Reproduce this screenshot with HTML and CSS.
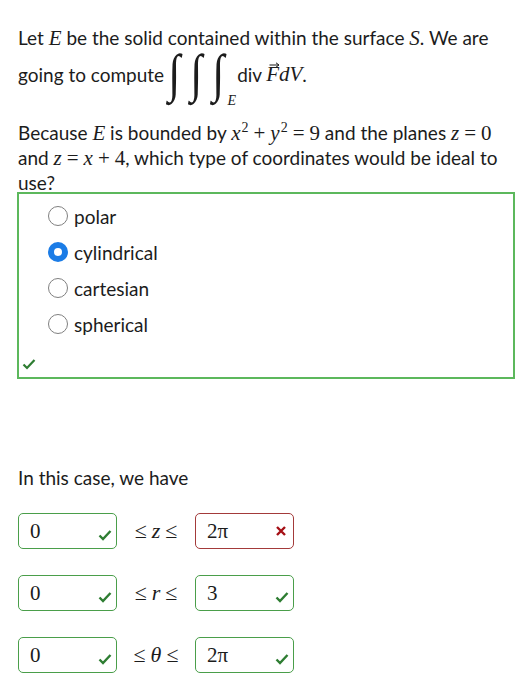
FILE: index.html
```html
<!DOCTYPE html>
<html>
<head>
<meta charset="utf-8">
<link rel="stylesheet" href="styles.css">
</head>
<body>
<div class="page">
  <p class="p1">Let <span class="m">E</span> be the solid contained within the surface <span class="m">S</span>. We are</p>
  <p class="p2"><span>going to compute</span> <span class="ints"><span class="int">∫</span><span class="int">∫</span><span class="int">∫</span><span class="sub m">E</span></span> <span>div</span> <span class="m vec"><svg class="arrow" width="11" height="6" viewBox="0 0 11 6"><path d="M0.5 3 H9.5 M7 0.8 L10 3 L7 5.2" fill="none" stroke="#1a1a1a" stroke-width="1"/></svg>F</span><span class="m">dV</span>.</p>
  <p class="p3"><span>Because </span><span class="m">E</span><span> is bounded by </span><span class="m">x</span><sup class="sup">2</sup><span class="r op">+</span><span class="m">y</span><sup class="sup">2</sup><span class="r op">=</span><span class="r">9</span><span> and the planes </span><span class="m">z</span><span class="r op">=</span><span class="r">0 </span><span>and </span><span class="m">z</span><span class="r op">=</span><span class="m">x</span><span class="r op">+</span><span class="r">4</span><span>, which type of coordinates would be ideal to </span><span>use?</span></p>
  <div class="choices">
    <div class="opt"><span class="radio"></span><span class="lbl">polar</span></div>
    <div class="opt"><span class="radio on"></span><span class="lbl">cylindrical</span></div>
    <div class="opt"><span class="radio"></span><span class="lbl">cartesian</span></div>
    <div class="opt"><span class="radio"></span><span class="lbl">spherical</span></div>
    <div class="okrow"><svg width="14" height="12" viewBox="0 0 14 12"><path d="M1.5 6.5 L5 10 L12.5 2" fill="none" stroke="#2e7d32" stroke-width="2.2"/></svg></div>
  </div>
  <p class="p4">In this case, we have</p>
  <div class="rows">
    <div class="row">
      <div class="inp good"><span class="val">0</span><svg class="ic" width="14" height="12" viewBox="0 0 14 12"><path d="M1.5 6.5 L5 10 L12.5 2" fill="none" stroke="#2e7d32" stroke-width="2.4"/></svg></div>
      <div class="rel"><span class="r">≤</span><span class="m v">z</span><span class="r">≤</span></div>
      <div class="inp bad"><span class="val">2π</span><svg class="ic x" width="12" height="12" viewBox="0 0 12 12"><path d="M2 2 L10 10 M10 2 L2 10" fill="none" stroke="#a50f15" stroke-width="2.4"/></svg></div>
    </div>
    <div class="row">
      <div class="inp good"><span class="val">0</span><svg class="ic" width="14" height="12" viewBox="0 0 14 12"><path d="M1.5 6.5 L5 10 L12.5 2" fill="none" stroke="#2e7d32" stroke-width="2.4"/></svg></div>
      <div class="rel"><span class="r">≤</span><span class="m v">r</span><span class="r">≤</span></div>
      <div class="inp good"><span class="val">3</span><svg class="ic" width="14" height="12" viewBox="0 0 14 12"><path d="M1.5 6.5 L5 10 L12.5 2" fill="none" stroke="#2e7d32" stroke-width="2.4"/></svg></div>
    </div>
    <div class="row">
      <div class="inp good"><span class="val">0</span><svg class="ic" width="14" height="12" viewBox="0 0 14 12"><path d="M1.5 6.5 L5 10 L12.5 2" fill="none" stroke="#2e7d32" stroke-width="2.4"/></svg></div>
      <div class="rel"><span class="r">≤</span><span class="m v">θ</span><span class="r">≤</span></div>
      <div class="inp good"><span class="val">2π</span><svg class="ic" width="14" height="12" viewBox="0 0 14 12"><path d="M1.5 6.5 L5 10 L12.5 2" fill="none" stroke="#2e7d32" stroke-width="2.4"/></svg></div>
    </div>
  </div>
</div>
</body>
</html>
```
FILE: styles.css
```css
html, body { margin: 0; padding: 0; background: #fff; }
body { font-family: Lato, "Open Sans", sans-serif; font-size: 19px; color: #1c1c1c; }
.page { padding: 26px 10px 0 18px; width: 503px; }
p { margin: 0; }
.m { font-family: "Liberation Serif", "DejaVu Serif", serif; font-style: italic; font-size: 21px; line-height: 1; }
.r { font-family: "Liberation Serif", "DejaVu Serif", serif; font-size: 21px; line-height: 1; }
.op { margin: 0 5px; }
.sup { font-family: "Liberation Serif", serif; font-size: 14px; vertical-align: 8px; line-height: 0; margin-left: 1px; }
.p1 { line-height: 24px; }
.p2 { height: 50px; display: flex; align-items: center; margin-top: -1px; white-space: pre; }
.ints { display: inline-flex; position: relative; align-items: center; margin: 0 3px 0 4px; font-family: "Liberation Serif", "DejaVu Serif", serif; }
.int { font-size: 44px; font-style: italic; line-height: 48px; width: 22px; display: inline-block; transform: scaleY(1.2); }
.sub { font-size: 14px; position: absolute; right: -2px; bottom: -10px; }
.vec { position: relative; margin-left: 4px; }
.arrow { position: absolute; left: 3px; top: -2px; }
.p3 { margin-top: 21px; line-height: 25px; }
.choices { margin-top: -3px; margin-left: -1px; border: 2px solid #5cb85c; height: 187px; width: 498px; box-sizing: border-box; padding: 4px 0 0 29px; }
.opt { display: flex; align-items: center; height: 36px; }
.radio { width: 20px; height: 20px; border: 1.5px solid #808080; border-radius: 50%; box-sizing: border-box; margin-right: 6px; }
.radio.on { border: 6px solid #1b7ce6; }
.lbl { font-size: 19px; }
.okrow { height: 36px; display: flex; align-items: center; margin-left: -26px; padding-top: 8px; box-sizing: border-box; }
.p4 { margin-top: 87px; line-height: 24px; }
.rows { margin-top: 23px; display: flex; flex-direction: column; gap: 26px; }
.row { display: flex; align-items: center; height: 36px; }
.inp { width: 99px; height: 36px; box-sizing: border-box; border-radius: 5px; display: flex; align-items: center; justify-content: space-between; padding: 0 4px 0 11px; }
.inp.good { border: 1.5px solid #4a9e4a; }
.inp.bad { border: 1.5px solid #a33a3a; }
.ic { margin-top: 8px; }
.ic.x { margin-top: 0; margin-right: 2px; }
.val { font-family: "Liberation Serif", "DejaVu Serif", serif; font-size: 21px; }
.rel { width: 78px; display: flex; justify-content: center; gap: 5px; }
.rel .r, .rel .m { font-size: 22px; }
```
